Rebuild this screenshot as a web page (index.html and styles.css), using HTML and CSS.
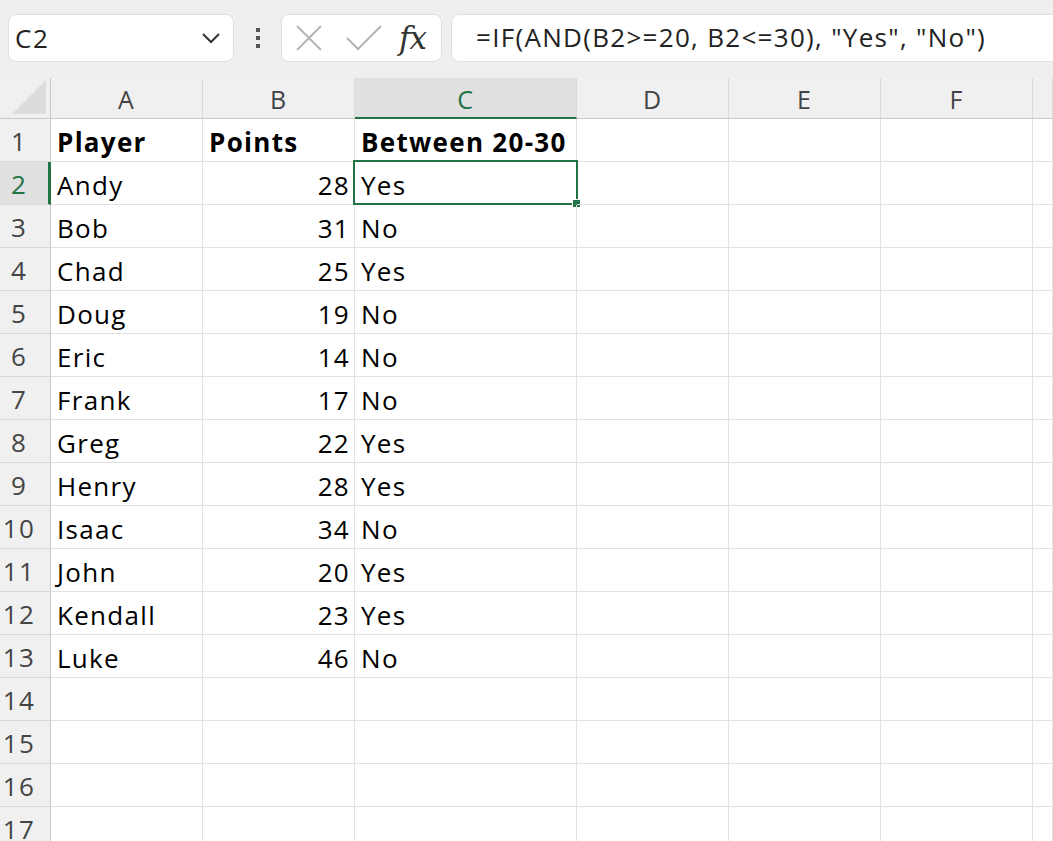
FILE: index.html
```html
<!DOCTYPE html>
<html lang="en">
<head>
    <meta charset="UTF-8" />
    <title>Between 20-30</title>
    <link rel="stylesheet" href="styles.css">
</head>
<body>
<div class="toolbar">
    <div class="name-box">
        <span class="cell-ref">C2</span>
        <svg class="chevron" width="20" height="12" viewBox="0 0 20 12">
            <path d="M2 2 L10 10 L18 2" fill="none" stroke="#333" stroke-width="2" />
        </svg>
    </div>
    <div class="dots"><span></span><span></span><span></span></div>
    <div class="fx-box">
        <svg width="28" height="28" viewBox="0 0 28 28">
            <path d="M2 2 L26 26 M26 2 L2 26" stroke="#b5b5b5" stroke-width="2" fill="none" />
        </svg>
        <svg width="38" height="28" viewBox="0 0 38 28">
            <path d="M2 14 L13 25 L36 2" stroke="#b5b5b5" stroke-width="2" fill="none" />
        </svg>
        <span class="fx">fx</span>
    </div>
    <div class="formula-box">=IF(AND(B2&gt;=20, B2&lt;=30), "Yes", "No")</div>
</div>

<div class="sheet">
    <div class="corner"><div class="triangle"></div></div>
    <div class="col-head">A</div>
    <div class="col-head">B</div>
    <div class="col-head active">C</div>
    <div class="col-head">D</div>
    <div class="col-head">E</div>
    <div class="col-head">F</div>
    <div class="col-head"></div>
</div>

<div class="sheet" id="rows"></div>

<script>
    const players = [
        ["Andy", 28], ["Bob", 31], ["Chad", 25], ["Doug", 19], ["Eric", 14], ["Frank", 17],
        ["Greg", 22], ["Henry", 28], ["Isaac", 34], ["John", 20], ["Kendall", 23], ["Luke", 46]
    ];
    const rows = document.getElementById("rows");

    function cell(text, cls) {
        const div = document.createElement("div");
        div.className = cls;
        div.textContent = text;
        rows.appendChild(div);
        return div;
    }

    for (let r = 1; r <= 17; r++) {
        cell(r, r === 2 ? "row-head active" : "row-head");
        let a = "", b = "", c = "";
        if (r === 1) {
            a = "Player"; b = "Points"; c = "Between 20-30";
        } else if (r <= 13) {
            const p = players[r - 2];
            a = p[0]; b = p[1];
            c = p[1] >= 20 && p[1] <= 30 ? "Yes" : "No";
        }
        const bold = r === 1 ? " bold" : "";
        cell(a, "cell" + bold);
        cell(b, r === 1 ? "cell bold" : "cell num");
        const cc = cell(c, "cell" + bold);
        if (r === 2) {
            const sel = document.createElement("div");
            sel.className = "selection";
            sel.innerHTML = '<span class="handle"></span>';
            cc.appendChild(sel);
        }
        cell("", "cell");
        cell("", "cell");
        cell("", "cell");
        cell("", "cell");
    }
</script>
</body>
</html>
```

FILE: styles.css
```css
:root {
    --grid-line: #e1e1e1;
    --head-bg: #f0f0f0;
    --head-active: #e0e0e0;
    --green: #217346;
    --ui-font: "Open Sans", "Noto Sans", sans-serif;
}

body {
    margin: 0;
    background-color: white;
    font-family: var(--ui-font);
    overflow: hidden;
}

.toolbar {
    display: flex;
    align-items: flex-start;
    height: 78px;
    padding-top: 14px;
    box-sizing: border-box;
    background-color: #f1efed;
}

.name-box {
    margin-left: 8px;
    width: 226px;
    height: 48px;
    box-sizing: border-box;
    background-color: white;
    border: 1px solid #e2e0de;
    border-radius: 8px;
    display: flex;
    align-items: center;
    justify-content: space-between;
    padding: 0 12px 0 6px;
}

.cell-ref {
    font-size: 26px;
    letter-spacing: 1.5px;
    color: #222;
}

.dots {
    width: 47px;
    height: 48px;
    display: flex;
    flex-direction: column;
    align-items: center;
    justify-content: center;
    gap: 4px;
}

.dots span {
    width: 4px;
    height: 4px;
    background-color: #555;
}

.fx-box {
    width: 161px;
    height: 48px;
    box-sizing: border-box;
    background-color: white;
    border: 1px solid #e2e0de;
    border-radius: 8px;
    display: flex;
    align-items: center;
    gap: 22px;
    padding-left: 13px;
}

.fx {
    font-family: "DejaVu Serif", "Liberation Serif", serif;
    font-style: italic;
    font-size: 31px;
    color: #333;
    letter-spacing: -1px;
    margin-left: -6px;
}

.formula-box {
    margin-left: 9px;
    flex: 1;
    height: 48px;
    box-sizing: border-box;
    background-color: white;
    border: 1px solid #e2e0de;
    border-right: none;
    border-radius: 8px 0 0 8px;
    padding-left: 24px;
    font-size: 26px;
    letter-spacing: 1.3px;
    line-height: 44px;
    color: #222;
    white-space: nowrap;
}

.sheet {
    display: grid;
    grid-template-columns: 51px 152px 152px 222px 152px 152px 152px 1fr;
}

#rows {
    grid-auto-rows: 43px;
}

.corner {
    height: 41px;
    box-sizing: border-box;
    background-color: var(--head-bg);
    border-right: 1px solid #c8c8c8;
    border-bottom: 1px solid #c8c8c8;
    position: relative;
}

.triangle {
    position: absolute;
    right: 4px;
    bottom: 4px;
    width: 0;
    height: 0;
    border-left: 34px solid transparent;
    border-bottom: 34px solid #dcdcdc;
}

.col-head {
    height: 41px;
    box-sizing: border-box;
    background-color: var(--head-bg);
    border-right: 1px solid #dadada;
    border-bottom: 1px solid #c8c8c8;
    text-align: center;
    font-size: 25px;
    letter-spacing: 1px;
    line-height: 42px;
    color: #444;
}

.col-head.active {
    background-color: var(--head-active);
    color: var(--green);
    border-bottom: 2px solid var(--green);
}

.row-head {
    box-sizing: border-box;
    background-color: var(--head-bg);
    border-right: 1px solid #c8c8c8;
    border-bottom: 1px solid #dadada;
    text-align: center;
    font-size: 26px;
    letter-spacing: 1.3px;
    line-height: 44px;
    color: #444;
    padding-right: 12px;
}

.row-head.active {
    background-color: var(--head-active);
    color: var(--green);
    border-right: 3px solid var(--green);
    padding-right: 10px;
}

.cell {
    box-sizing: border-box;
    border-right: 1px solid var(--grid-line);
    border-bottom: 1px solid var(--grid-line);
    font-size: 26px;
    letter-spacing: 1.3px;
    line-height: 46px;
    color: #000;
    padding: 0 4px 0 6px;
    white-space: nowrap;
    position: relative;
}

.cell.bold {
    font-weight: bold;
}

.cell.num {
    text-align: right;
}

.selection {
    position: absolute;
    top: -2px;
    left: -2px;
    right: -2px;
    bottom: -1px;
    border: 2px solid var(--green);
}

.handle {
    position: absolute;
    right: -5px;
    bottom: -5px;
    width: 7px;
    height: 7px;
    background-color: var(--green);
    border: 1px solid white;
}
```
